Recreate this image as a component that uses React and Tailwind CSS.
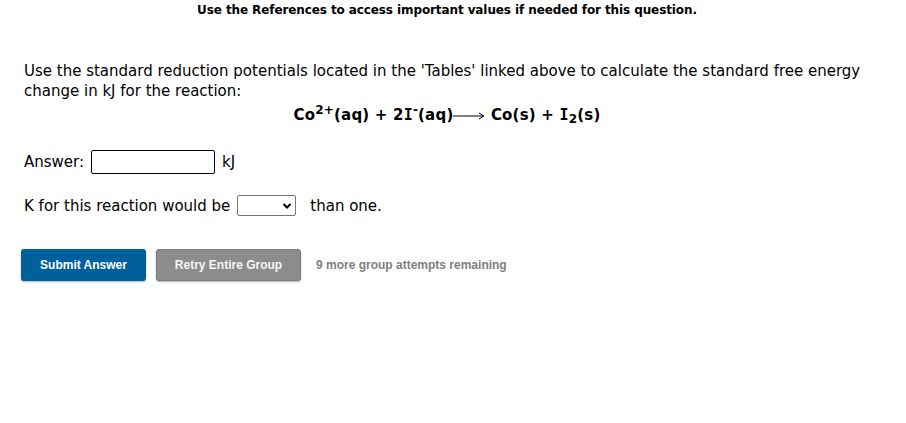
export default function App() {
  const serifI = <span style={{ fontFamily: '"DejaVu Sans Mono", monospace' }}>I</span>;
  return (
    <div className="w-[906px] h-[423px] bg-white text-black" style={{ fontFamily: '"DejaVu Sans", Verdana, sans-serif' }}>
      <div className="w-[894px] pt-[2px] text-center text-[12px] font-bold leading-[16px] tracking-[-0.1px]">
        Use the References to access important values if needed for this question.
      </div>
      <div className="px-[24px] pt-[43px]">
        <p className="text-[15px] leading-[20px]">
          Use the standard reduction potentials located in the 'Tables' linked above to calculate the standard free energy change in kJ for the reaction:
        </p>
        <div className="mt-[4px] pr-[12px] text-center text-[15px] font-bold leading-[20px] tracking-[0.2px]">
          Co<sup className="text-[12px]">2+</sup>(aq) + 2{serifI}<sup className="text-[12px]">-</sup>(aq)
          <svg width="32" height="10" viewBox="0 0 32 10" className="inline-block align-middle">
            <line x1="0" y1="5" x2="30" y2="5" stroke="black" strokeWidth="1" />
            <path d="M26 2 L31 5 L26 8" fill="none" stroke="black" strokeWidth="1" />
          </svg>
          {' '}Co(s) + {serifI}<sub className="text-[12px]">2</sub>(s)
        </div>
        <div className="mt-[25px] flex items-center text-[15px] leading-[20px]">
          <span>Answer:</span>
          <input className="ml-[7px] h-[24px] w-[124px] rounded-[2px] border border-black" />
          <span className="ml-[7px]">kJ</span>
        </div>
        <div className="mt-[21px] flex items-center text-[15px] leading-[20px]">
          <span>K for this reaction would be</span>
          <div className="ml-[7px] flex h-[21px] w-[59px] items-center justify-end rounded-[2px] border border-[#767676] pr-[3px]">
            <svg width="10" height="8" viewBox="0 0 10 8">
              <path d="M1.5 2 L5 5.5 L8.5 2" fill="none" stroke="black" strokeWidth="2" />
            </svg>
          </div>
          <span className="ml-[14px]">than one.</span>
        </div>
        <div className="mt-[33px] -ml-[3px] flex items-center" style={{ fontFamily: '"Liberation Sans", Arial, sans-serif' }}>
          <button className="h-[32px] w-[125px] rounded-[3px] bg-[#00609c] text-[12px] font-bold text-white shadow-[0_1px_2px_rgba(0,0,0,0.3)]">
            Submit Answer
          </button>
          <button className="ml-[10px] h-[32px] w-[145px] rounded-[3px] border border-[#7a7a7a] bg-[#8c8c8c] text-[12px] font-bold text-[#f5f5f5] shadow-[0_1px_2px_rgba(0,0,0,0.3)]">
            Retry Entire Group
          </button>
          <span className="ml-[15px] text-[12px] font-bold text-[#808080]">9 more group attempts remaining</span>
        </div>
      </div>
    </div>
  );
}
